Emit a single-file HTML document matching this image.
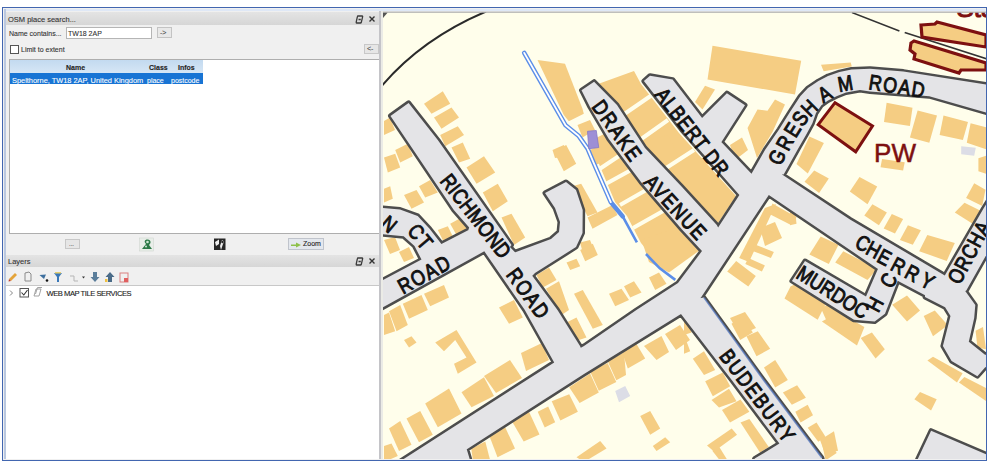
<!DOCTYPE html>
<html><head><meta charset="utf-8">
<style>
*{margin:0;padding:0;box-sizing:border-box}
html,body{width:991px;height:464px;overflow:hidden;background:#fff}
body{position:relative;font-family:"Liberation Sans",sans-serif;font-size:7px;color:#222}
.a{position:absolute}
#frame{left:2px;top:7px;width:985px;height:454px;border:1.6px solid #4266b0;background:#f0f0f0}
.tb{background:linear-gradient(#e4e4e4,#d6d6d6);height:13px}
.t{white-space:nowrap;-webkit-text-stroke:0.1px currentColor}
</style></head><body>
<div class="a" id="frame"></div>
<!-- light blue inner strip -->
<div class="a" style="left:4px;top:9px;width:981px;height:2px;background:#dfe8f6"></div>
<div class="a" style="left:3.5px;top:9px;width:2.3px;height:450px;background:#bac8e0"></div>

<!-- OSM title bar -->
<div class="a tb" style="left:6px;top:12px;width:375px;height:13px"></div>
<div class="a t" style="left:8px;top:15px;font-size:7.5px;color:#333">OSM place search...</div>
<svg class="a" style="left:354px;top:14px" width="24" height="10">
 <path d="M4 2 L8.2 2 Q8.8 2 8.6 2.8 L7.3 8.3 Q7.1 9 6.4 9 L2.6 9 Q2 9 2.2 8.2 L3.4 2.7 Q3.5 2 4 2 Z M4.5 5.5 L6.8 5.5" fill="none" stroke="#3a3a3a" stroke-width="1.3"/>
 <path d="M15.5 2.5l5 5M20.5 2.5l-5 5" stroke="#333" stroke-width="1.4"/>
</svg>
<div class="a t" style="left:9px;top:30px;font-size:7px;color:#333">Name contains...</div>
<div class="a" style="left:66px;top:27px;width:86px;height:12px;background:#fff;border:1px solid #b5b5b5"></div>
<div class="a t" style="left:68px;top:30px;font-size:7px;color:#333">TW18 2AP</div>
<div class="a" style="left:157px;top:27px;width:15px;height:11px;background:#e8e8e8;border:1px solid #c3c3c3"></div>
<div class="a t" style="left:160px;top:29px;font-size:7px;color:#444">-&gt;</div>
<div class="a" style="left:10px;top:45px;width:9px;height:9px;background:#fff;border:1px solid #555"></div>
<div class="a t" style="left:21px;top:46px;font-size:7px;color:#333">Limit to extent</div>
<div class="a" style="left:364px;top:44px;width:15px;height:10px;background:#e6e6e6;border:1px solid #c8c8c8"></div>
<div class="a t" style="left:367px;top:45px;font-size:7px;color:#444">&lt;-</div>

<!-- table -->
<div class="a" style="left:9px;top:59px;width:371px;height:175px;background:#fff;border:1px solid #aeaeae"></div>
<div class="a" style="left:10px;top:60px;width:193px;height:13px;background:linear-gradient(#c3daf0,#d6e6f5)"></div>
<div class="a t" style="left:66px;top:64px;font-size:7px;font-weight:bold;color:#222">Name</div>
<div class="a t" style="left:149px;top:64px;font-size:7px;font-weight:bold;color:#222">Class</div>
<div class="a t" style="left:178px;top:64px;font-size:7px;font-weight:bold;color:#222">Infos</div>
<div class="a" style="left:10px;top:73px;width:193px;height:11px;background:#1874d4"></div>
<div class="a t" style="left:12px;top:76px;font-size:7.4px;color:#fff">Spelthorne, TW18 2AP, United Kingdom</div>
<div class="a t" style="left:147px;top:76.5px;font-size:7px;color:#fff">place</div>
<div class="a t" style="left:171px;top:76.5px;font-size:7px;color:#fff">postcode</div>

<!-- button row -->
<div class="a" style="left:65px;top:239px;width:15px;height:10px;background:#e6e6e6;border:1px solid #c8c8c8"></div>
<div class="a t" style="left:69px;top:241px;font-size:6px;color:#555">...</div>
<div class="a" style="left:288px;top:238px;width:36px;height:12px;background:#e4e8ee;border:1px solid #c0c4cc"></div>
<div class="a t" style="left:303px;top:240px;font-size:7px;color:#222">Zoom</div>

<!-- Layers title -->
<div class="a tb" style="left:6px;top:255px;width:374px;height:12px"></div>
<div class="a t" style="left:8px;top:257px;font-size:7.5px;color:#333">Layers</div>
<svg class="a" style="left:354px;top:256px" width="24" height="10">
 <path d="M4 2 L8.2 2 Q8.8 2 8.6 2.8 L7.3 8.3 Q7.1 9 6.4 9 L2.6 9 Q2 9 2.2 8.2 L3.4 2.7 Q3.5 2 4 2 Z M4.5 5.5 L6.8 5.5" fill="none" stroke="#3a3a3a" stroke-width="1.3"/>
 <path d="M15.5 2.5l5 5M20.5 2.5l-5 5" stroke="#333" stroke-width="1.4"/>
</svg>
<div class="a" style="left:6px;top:285px;width:373px;height:174px;background:#fff;border-top:1px solid #c8c8c8"></div>
<svg class="a" style="left:0;top:230px" width="380" height="70">
 <!-- green icon button -->
 <rect x="139.5" y="238" width="14" height="13" fill="#e9eee9" stroke="#d0d6d0" stroke-width="0.6" transform="translate(0,-230)"/>
 <g transform="translate(0,-230)">
  <path d="M142 249 L146 244 Q143 241 146.5 239.5 Q151 239 150.5 243 L149 245 L152 249 Z" fill="#2d7a48"/>
  <circle cx="147.5" cy="242" r="1.3" fill="#cfe8d5"/>
  <circle cx="146" cy="246.5" r="1" fill="#cfe8d5"/>
  <rect x="214" y="238.5" width="11.5" height="11.5" fill="#262626"/>
  <path d="M215 242 L219 239.5 L219 244 L216 246 Z M222 240 Q225 241 223 244 L221 250 L220 246 Z" fill="#eee"/>
  <circle cx="222.5" cy="242" r="1.2" fill="#262626"/>
  <!-- zoom arrow -->
  <path d="M291 244.5 L296 244.5 L296 242.5 L301 245 L296 247.5 L296 246 L291 246 Z" fill="#8dc04a"/>
 </g>
 <!-- toolbar -->
 <g transform="translate(0,-230)">
  <path d="M9 279 L15 273 L17 275 L11 281 Z" fill="#e4a43a"/><path d="M9 279 L11 281 L8.5 281.5 Z" fill="#c0392b"/>
  <path d="M25 281 L25 273 L29 272 L31 274 L31 281 Z" fill="none" stroke="#8a8a8a" stroke-width="1"/>
  <path d="M39.5 275 L46 274.5 L44 279 Z" fill="#3d6f9e"/><circle cx="47" cy="280.5" r="1.3" fill="#111"/>
  <path d="M54 273 L62 273 L59 277 L59 282 L57 282 L57 277 Z" fill="#3a78b8"/><rect x="55" y="272" width="6" height="1.5" fill="#e8d070"/>
  <path d="M70 276 L74 276 L74 281 L78 281" fill="none" stroke="#b5b5b5" stroke-width="1"/>
  <path d="M82 276.5 L85 276.5 L83.5 278.5 Z" fill="#333"/>
  <path d="M93 272 L97 272 L97 277 L99.5 277 L95 282 L90.5 277 L93 277 Z" fill="#5a7d9a"/>
  <path d="M108 282 L112 282 L112 277 L114.5 277 L110 272 L105.5 277 L108 277 Z" fill="#4a6b88"/><rect x="105" y="279" width="2.5" height="3" fill="#f0c040"/>
  <rect x="120" y="273" width="8" height="9" fill="none" stroke="#d98080" stroke-width="1"/><rect x="124" y="278" width="4" height="4" fill="#e06060"/>
  <!-- tree row -->
  <path d="M10 290.5 L12.5 293 L10 295.5" fill="none" stroke="#777" stroke-width="0.9"/>
  <rect x="20" y="288.5" width="8.5" height="8.5" fill="#fff" stroke="#555" stroke-width="1"/>
  <path d="M21.5 292.5 L23.8 295 L27.5 290" fill="none" stroke="#333" stroke-width="1.1"/>
  <path d="M34 296 L36 289 L41 289 L39 296 Z M35.5 294 L37.5 287.5 L42 287.5" fill="none" stroke="#9a9a9a" stroke-width="0.9"/>
 </g>
</svg>
<div class="a t" style="left:46.5px;top:288.5px;font-size:7.6px;color:#222;letter-spacing:-0.45px;-webkit-text-stroke:0.12px #222">WEB MAP TILE SERVICES</div>

<!-- splitter -->
<div class="a" style="left:378.5px;top:11px;width:2.2px;height:448px;background:#c4c4c8"></div>
<div class="a" style="left:380.7px;top:11px;width:2.3px;height:448px;background:#ebebe6"></div>

<!-- MAP -->
<svg class="a" id="map" style="left:0;top:0" width="991" height="464" viewBox="0 0 991 464">
<defs><clipPath id="mc"><rect x="383" y="12" width="603" height="447"/></clipPath></defs>
<g clip-path="url(#mc)">
<rect x="383" y="12" width="603" height="447" fill="#fffeeb"/>
<!--MAPSTART-->
<g fill="#f5cd83"><path d="M424.0 103.8 L442.8 91.2 L450.2 103.8 L431.5 113.8Z"/><path d="M434.0 117.5 L451.5 107.5 L459.0 117.5 L441.5 128.8Z"/><path d="M440.2 135.0 L457.8 126.2 L464.0 135.0 L445.2 146.2Z"/><path d="M451.5 147.5 L462.8 142.5 L470.2 158.8 L459.0 162.5Z"/><path d="M466.5 167.5 L484.0 156.2 L495.2 172.5 L476.5 183.8Z"/><path d="M482.8 192.5 L497.8 183.8 L507.8 201.2 L492.8 211.2Z"/><path d="M501.5 217.5 L511.5 213.8 L525.2 237.5 L514.0 245.0Z"/><path d="M384.0 121.0 L390.0 117.5 L395.0 130.0 L384.0 135.0Z"/><path d="M384.0 157.5 L395.2 153.8 L400.2 167.5 L387.8 172.5Z"/><path d="M395.2 150.0 L407.8 143.8 L412.8 156.2 L400.2 162.5Z"/><path d="M384.0 188.8 L390.2 186.2 L392.8 198.8 L384.0 202.5Z"/><path d="M404.0 195.0 L416.5 190.0 L424.0 202.5 L411.5 208.8Z"/><path d="M419.0 186.2 L430.2 180.0 L437.8 192.5 L425.2 197.5Z"/><path d="M437.8 230.0 L447.8 226.2 L454.0 238.8 L444.0 242.5Z"/><path d="M450.2 223.8 L461.5 217.5 L469.0 228.8 L456.5 235.0Z"/><path d="M384.0 240.0 L395.0 237.0 L400.0 250.0 L390.0 254.0Z"/><path d="M399.0 252.0 L409.0 247.0 L414.0 258.0 L404.0 262.0Z"/><path d="M537.5 60.0 L565.0 63.8 L582.5 108.8 L583.8 113.8 L568.8 121.2 L563.8 115.0Z"/><path d="M577.5 125.0 L590.0 120.0 L595.0 130.0 L582.5 137.5Z"/><path d="M552.5 150.0 L563.8 145.0 L568.8 156.0 L555.0 158.0Z"/><path d="M553.8 151.2 L566.2 145.0 L576.2 163.8 L563.8 171.2Z"/><path d="M598.0 84.0 L641.0 140.0 L673.0 180.0 L716.0 226.0 L736.0 196.0 L679.0 133.0 L641.0 84.0 L634.0 71.0Z"/><path d="M695.0 102.0 L705.0 85.8 L715.0 89.5 L702.5 109.5Z"/><path d="M712.5 45.8 L801.2 60.8 L795.0 94.5 L707.5 79.5Z"/><path d="M747.5 128.0 L757.5 109.5 L767.5 110.8 L775.0 99.5 L785.0 104.5 L772.5 132.0 L757.0 158.0Z"/><path d="M730.0 145.0 L742.0 137.5 L748.0 150.0 L735.0 160.0Z"/><path d="M821.0 64.8 L850.7 62.6 L851.8 66.5 L823.7 71.3Z"/><path d="M886.6 102.7 L912.5 107.8 L909.9 125.9 L884.0 122.0Z"/><path d="M917.6 110.4 L937.0 115.6 L929.3 142.7 L909.9 137.6Z"/><path d="M943.5 115.6 L968.0 122.0 L962.9 140.1 L939.6 135.0Z"/><path d="M970.6 123.3 L986.0 127.2 L986.0 149.2 L966.8 142.7Z"/><path d="M882.1 159.1 L904.7 162.3 L903.1 170.4 L880.5 167.2Z"/><path d="M978.4 158.2 L986.0 155.7 L986.0 173.8 L978.4 171.2Z"/><path d="M796.5 163.9 L809.4 136.5 L823.9 142.9 L807.8 173.6Z"/><path d="M804.5 181.7 L814.2 170.4 L828.8 178.5 L819.1 193.0Z"/><path d="M849.8 191.4 L859.5 176.9 L877.2 186.5 L867.5 204.3Z"/><path d="M864.3 215.6 L872.4 204.3 L886.9 212.4 L878.9 225.3Z"/><path d="M883.7 228.5 L891.8 214.0 L903.1 218.9 L895.0 233.4Z"/><path d="M899.9 239.9 L907.9 225.3 L920.9 230.2 L912.8 244.7Z"/><path d="M919.2 251.2 L927.3 235.0 L954.8 243.1 L946.7 260.9Z"/><path d="M954.8 212.4 L964.5 202.7 L980.6 210.8 L972.6 223.7Z"/><path d="M966.1 197.9 L974.2 183.3 L985.5 189.8 L982.2 205.9Z"/><path d="M790.0 209.0 L794.8 207.5 L796.5 223.7 L790.0 225.3Z"/><path d="M809.4 254.4 L820.7 236.6 L838.5 244.7 L828.8 264.1Z"/><path d="M835.2 262.5 L843.3 251.2 L877.2 268.9 L867.5 280.0Z"/><path d="M764.9 208.1 L776.0 204.0 L749.0 262.0 L739.2 257.9Z"/><path d="M772.4 203.6 L796.6 217.2 L790.5 224.7 L769.4 214.1Z"/><path d="M760.0 228.0 L775.0 222.0 L782.0 238.0 L765.0 246.0Z"/><path d="M754.3 244.3 L773.9 251.9 L770.9 257.9 L751.3 250.4Z"/><path d="M748.3 257.9 L764.9 265.4 L761.9 271.5 L745.3 263.9Z"/><path d="M727.2 271.5 L736.2 260.9 L755.8 276.0 L748.3 286.6Z"/><path d="M790.5 286.6 L799.6 282.0 L826.7 301.7 L817.7 319.8 L784.5 298.6Z"/><path d="M820.7 307.7 L834.0 302.0 L842.0 318.0 L828.0 324.0Z"/><path d="M730.0 318.0 L745.0 312.0 L756.0 328.0 L740.0 335.0Z"/><path d="M384.0 315.0 L389.0 312.5 L395.2 331.2 L384.0 335.0Z"/><path d="M389.0 311.2 L400.2 305.0 L407.8 325.0 L396.5 331.2Z"/><path d="M402.8 303.8 L421.5 295.0 L427.8 310.0 L409.0 318.8Z"/><path d="M424.0 293.8 L444.0 285.0 L449.0 297.5 L430.2 306.2Z"/><path d="M404.0 340.0 L411.5 336.2 L416.5 342.5 L409.0 347.5Z"/><path d="M435.2 342.5 L456.5 330.0 L476.5 362.5 L457.8 373.8 L454.0 363.8 L466.5 357.5 L455.2 340.0 L444.0 351.2Z"/><path d="M499.0 307.5 L514.0 300.0 L522.8 317.5 L509.0 323.8Z"/><path d="M384.0 446.0 L391.5 443.5 L397.8 456.0 L384.0 462.0Z"/><path d="M389.0 428.5 L400.2 421.0 L411.5 444.8 L399.0 451.0Z"/><path d="M406.5 418.5 L420.2 411.0 L432.8 434.8 L419.0 442.2Z"/><path d="M425.2 403.5 L449.0 388.5 L461.5 413.5 L437.8 427.2Z"/><path d="M461.5 392.2 L484.0 377.2 L494.0 396.0 L471.5 407.2Z"/><path d="M484.0 376.0 L510.0 360.0 L522.0 378.0 L496.0 393.0Z"/><path d="M521.0 353.0 L542.0 343.0 L549.0 360.0 L526.0 371.0Z"/><path d="M471.3 448.5 L485.3 441.5 L490.6 462.0 L473.1 462.0Z"/><path d="M488.8 434.5 L504.5 425.8 L515.0 448.5 L497.5 457.2Z"/><path d="M511.5 420.5 L529.0 411.8 L539.5 434.5 L523.7 441.5Z"/><path d="M537.7 411.8 L548.2 406.5 L555.2 422.3 L544.7 427.5Z"/><path d="M551.7 401.3 L569.2 394.3 L577.9 411.8 L560.4 420.5Z"/><path d="M569.2 387.3 L590.1 373.4 L598.8 392.6 L579.6 403.1Z"/><path d="M590.1 371.6 L607.6 362.9 L616.3 382.1 L598.8 390.8Z"/><path d="M607.6 361.1 L624.0 352.4 L626.0 375.1 L616.3 380.3Z"/><path d="M622.0 352.0 L636.5 344.0 L645.2 358.5 L627.8 368.5Z"/><path d="M644.0 346.0 L661.5 336.0 L669.0 352.0 L656.5 360.0Z"/><path d="M665.0 334.0 L680.0 325.0 L690.0 340.0 L676.0 350.0Z"/><path d="M640.2 416.0 L650.2 411.0 L660.2 428.5 L650.2 434.8Z"/><path d="M652.8 446.0 L665.2 437.2 L670.2 442.2 L656.5 451.0Z"/><path d="M576.5 457.2 L600.2 441.0 L606.5 448.5 L584.0 462.0Z"/><path d="M536.5 275.0 L549.0 267.5 L556.5 280.0 L542.8 287.5Z"/><path d="M546.0 288.8 L559.0 281.2 L569.0 310.0 L561.5 315.0Z"/><path d="M566.5 322.5 L576.5 317.5 L586.5 337.5 L575.2 341.2Z"/><path d="M574.0 293.8 L582.8 290.0 L602.8 325.0 L592.8 328.8Z"/><path d="M566.5 262.5 L576.5 258.8 L580.2 266.2 L570.2 270.0Z"/><path d="M580.2 250.0 L592.8 243.8 L597.8 255.0 L585.2 261.2Z"/><path d="M609.0 293.8 L621.5 288.8 L629.0 300.0 L615.2 306.2Z"/><path d="M624.0 286.2 L634.0 281.2 L641.5 292.5 L630.2 297.5Z"/><path d="M649.0 277.5 L659.0 272.5 L666.5 283.8 L655.2 290.0Z"/><path d="M572.5 186.2 L581.2 183.8 L597.5 212.5 L587.5 216.2Z"/><path d="M592.0 140.0 L599.0 164.0 L615.0 202.0 L627.0 216.0 L641.0 243.0 L652.0 256.0 L700.0 250.0 L650.0 180.0 L612.0 130.0Z"/><path d="M580.0 242.5 L590.0 240.0 L595.0 252.5 L583.8 256.0Z"/><path d="M641.5 240.0 L684.0 225.0 L700.0 250.0 L669.0 272.5 L649.0 262.0Z"/><path d="M650.0 140.0 L668.0 135.0 L680.0 160.0 L660.0 165.0Z"/><path d="M590.0 150.0 L600.0 145.0 L606.0 160.0 L596.0 165.0Z"/><path d="M587.5 217.5 L612.5 205.0 L617.5 215.0 L592.5 228.8Z"/><path d="M731.5 323.8 L742.8 316.2 L752.8 332.5 L740.2 340.0Z"/><path d="M746.5 336.2 L757.8 331.2 L770.2 348.8 L756.5 356.2Z"/><path d="M764.0 367.5 L775.2 360.0 L787.8 380.0 L775.2 387.5Z"/><path d="M782.9 392.4 L797.1 385.3 L805.9 397.7 L791.8 404.7Z"/><path d="M795.3 411.8 L807.7 404.7 L813.0 415.3 L800.6 422.4Z"/><path d="M807.7 427.7 L816.5 422.4 L825.3 436.5 L818.3 441.8Z"/><path d="M820.0 440.0 L834.0 431.2 L838.0 450.7 L825.3 454.2Z"/><path d="M684.0 320.0 L687.8 317.5 L691.5 332.5 L684.0 335.0Z"/><path d="M684.0 342.5 L686.5 341.2 L690.2 351.2 L684.0 353.8Z"/><path d="M692.8 358.8 L704.0 351.2 L715.2 370.0 L704.0 375.0Z"/><path d="M705.2 381.2 L722.8 372.5 L730.2 386.2 L712.8 396.2Z"/><path d="M711.5 400.0 L729.0 388.8 L736.5 401.2 L719.0 407.5Z"/><path d="M722.0 410.0 L740.5 399.4 L749.4 411.8 L730.0 422.4Z"/><path d="M707.0 445.4 L731.7 428.6 L737.0 434.8 L714.0 451.6Z"/><path d="M712.3 450.7 L719.3 447.1 L728.2 461.3 L721.1 462.0Z"/><path d="M740.5 422.4 L749.4 418.9 L768.8 447.1 L760.0 452.4Z"/><path d="M821.9 321.5 L838.5 312.2 L864.4 327.0 L857.0 345.6Z"/><path d="M860.7 338.1 L871.9 332.6 L884.8 349.3 L875.6 358.5Z"/><path d="M892.2 304.8 L907.0 295.6 L920.0 310.4 L907.0 321.5Z"/><path d="M923.7 315.9 L934.8 310.4 L947.8 325.2 L933.0 336.3Z"/><path d="M927.4 360.4 L933.0 356.7 L962.6 373.3 L957.0 382.6Z"/><path d="M958.9 382.6 L964.4 377.0 L986.0 388.1 L986.0 401.1Z"/><path d="M914.4 399.3 L920.0 391.9 L936.7 399.3 L931.1 410.4Z"/><path d="M975.6 330.7 L983.0 327.0 L986.0 349.3 L977.4 347.4Z"/><path d="M820.0 434.4 L827.4 438.1 L836.7 453.0 L825.6 460.4Z"/></g>
<path d="M961.2 146.2 L975.8 147.8 L974.2 155.8 L961.2 154.2Z M615.2 391.0 L625.2 386.0 L630.2 396.0 L619.0 402.2Z" fill="#dcdde6"/>
<path d="M598.0 170.0 L628.0 150.0 M602.0 186.0 L642.0 164.0 M620.0 205.0 L655.0 185.0 M633.0 228.0 L672.0 206.0 M620.0 117.0 L652.0 95.0 M637.0 142.0 L668.0 120.0 M663.0 170.0 L694.0 150.0" fill="none" stroke="#fffeeb" stroke-width="4"/>
<path d="M380 88 Q 420.5 39.25 486 11.5" fill="none" stroke="#2a2a2a" stroke-width="2"/>
<path d="M852 12.6 L899.4 31.1 M904.7 32.6 L990 60" fill="none" stroke="#333" stroke-width="1.6"/>
<path d="M921 25 L935 24 L937 22 L986 35 L986 47 L922 37 Z M911 43 L914 41 L986 63 L986 70 L961 70 L959 73 L914 59 L915 54 L910 50 Z" fill="#f5cd83" stroke="#7d1010" stroke-width="3.2" stroke-linejoin="miter"/>
<path d="M818.2 124.6 L835 102.7 L872.5 126 L855.7 151.8 Z" fill="#f5cd83" stroke="#7d1010" stroke-width="3"/>
<path d="M524.2 52.9 L565.6 125.3 L578.5 135.7 L587.6 148.6 L594.2 164.2 L610.8 202.1 L622.7 216.4" fill="none" stroke="#5b8ee8" stroke-width="4.6" stroke-linejoin="round" stroke-linecap="round"/>
<path d="M524.2 52.9 L565.6 125.3 L578.5 135.7 L587.6 148.6 L594.2 164.2 L610.8 202.1" fill="none" stroke="#fff" stroke-width="1.8" stroke-linejoin="round" stroke-linecap="round"/>
<path d="M622.7 216.4 L636.9 242.4 M646 254 L659.8 268.3 L675.3 279.9" fill="none" stroke="#5b8ee8" stroke-width="2.6"/>
<path d="M587.5 131.25 L596.25 130.5 L598.75 147.5 L588.75 148.75 Z" fill="#9d8fd6" stroke="#8478c4" stroke-width="0.8"/>
<path d="M390.5 115.9 L408.6 102.9 L437.8 140.0 L511.5 245.0 L500.0 260.0 L470.5 229.0 L453.8 210.0Z M470.0 225.0 L498.0 235.0 L515.5 252.7 L531.7 275.0 L557.5 310.0 L580.0 346.0 L585.0 358.0 L554.2 362.4 L524.8 310.0 L484.3 251.3 L465.0 240.0Z M370.0 207.0 L400.0 209.5 L417.7 215.9 L429.6 228.8 L441.4 243.9 L450.0 250.0 L425.0 268.0 L421.5 259.6 L414.5 246.0 L403.7 236.3 L370.0 233.0Z M370.0 287.0 L421.5 259.6 L441.4 243.9 L470.5 229.0 L480.0 232.0 L490.0 248.0 L484.3 251.3 L370.0 314.5Z M505.0 258.0 L514.0 252.7 L551.0 239.0 L559.0 232.0 L560.0 222.0 L555.0 208.0 L545.0 193.0 L566.0 182.0 L576.0 190.0 L582.7 210.0 L582.5 233.0 L576.0 247.0 L535.0 273.0 L524.0 284.0Z M385.0 471.0 L554.2 362.4 L584.0 346.0 L636.4 310.0 L678.0 283.0 L702.0 251.0 L716.8 229.6 L739.4 194.9 L751.5 173.8 L765.0 150.0 L779.2 129.3 L790.0 112.0 L800.3 96.2 L808.0 88.0 L818.4 81.1 L828.0 76.0 L839.5 72.1 L851.5 69.5 L870.0 68.8 L903.4 71.6 L995.0 86.0 L995.0 115.0 L929.3 96.2 L870.0 91.5 L860.0 90.1 L846.0 92.5 L836.5 96.2 L828.0 100.5 L821.4 105.2 L816.0 113.0 L812.4 123.3 L806.0 135.0 L798.8 147.4 L783.7 174.6 L781.7 174.3 L768.8 195.0 L701.0 297.6 L682.2 313.3 L584.0 374.0 L466.5 449.5 L445.0 470.0Z M581.5 90.2 L594.1 81.7 L617.0 105.0 L645.0 148.0 L682.0 187.0 L716.8 225.0 L730.0 250.0 L702.0 251.0 L682.0 229.6 L641.0 182.0 L608.8 139.0 L590.0 107.0Z M643.9 81.1 L650.0 75.7 L672.6 79.6 L702.7 118.8 L721.3 142.0 L751.5 173.8 L760.0 190.0 L739.4 194.9 L682.0 130.0Z M695.0 125.0 L726.9 93.2 L745.0 105.2 L720.8 143.0 L710.0 140.0Z M775.0 165.0 L781.7 174.3 L850.0 219.4 L944.8 275.4 L960.0 290.0 L935.5 300.8 L899.5 281.8 L878.0 268.9 L768.8 195.0 L760.0 185.0Z M944.8 275.4 L983.5 208.6 L995.0 190.0 L995.0 262.0 L985.7 256.0 L966.3 290.5 L950.0 300.0Z M925.0 290.0 L964.5 290.0 L975.3 305.1 L974.2 318.0 L968.8 341.7 L985.0 354.7 L995.0 354.0 L995.0 362.0 L985.0 367.6 L977.4 376.2 L951.6 361.1 L942.9 346.0 L946.2 333.1 L950.5 315.9 L945.1 307.2 L925.0 297.0Z M805.0 261.0 L866.0 296.6 L879.0 266.4 L881.0 260.0 L902.0 268.0 L897.0 282.8 L885.0 313.8 L874.7 321.6 L854.0 319.8 L791.9 281.0Z M680.4 313.3 L690.0 300.0 L703.9 297.6 L763.5 380.0 L821.8 457.7 L825.0 470.0 L750.0 470.0 L754.7 458.6 L779.4 443.6 L731.7 380.0Z M440.0 460.0 L466.5 448.5 L473.0 470.0 L400.0 470.0Z M912.6 470.0 L931.1 430.7 L995.0 458.0 L995.0 470.0Z" fill="#4d4d4d" stroke="#4d4d4d" stroke-width="5" stroke-linejoin="round"/>
<path d="M390.5 115.9 L408.6 102.9 L437.8 140.0 L511.5 245.0 L500.0 260.0 L470.5 229.0 L453.8 210.0Z M470.0 225.0 L498.0 235.0 L515.5 252.7 L531.7 275.0 L557.5 310.0 L580.0 346.0 L585.0 358.0 L554.2 362.4 L524.8 310.0 L484.3 251.3 L465.0 240.0Z M370.0 207.0 L400.0 209.5 L417.7 215.9 L429.6 228.8 L441.4 243.9 L450.0 250.0 L425.0 268.0 L421.5 259.6 L414.5 246.0 L403.7 236.3 L370.0 233.0Z M370.0 287.0 L421.5 259.6 L441.4 243.9 L470.5 229.0 L480.0 232.0 L490.0 248.0 L484.3 251.3 L370.0 314.5Z M505.0 258.0 L514.0 252.7 L551.0 239.0 L559.0 232.0 L560.0 222.0 L555.0 208.0 L545.0 193.0 L566.0 182.0 L576.0 190.0 L582.7 210.0 L582.5 233.0 L576.0 247.0 L535.0 273.0 L524.0 284.0Z M385.0 471.0 L554.2 362.4 L584.0 346.0 L636.4 310.0 L678.0 283.0 L702.0 251.0 L716.8 229.6 L739.4 194.9 L751.5 173.8 L765.0 150.0 L779.2 129.3 L790.0 112.0 L800.3 96.2 L808.0 88.0 L818.4 81.1 L828.0 76.0 L839.5 72.1 L851.5 69.5 L870.0 68.8 L903.4 71.6 L995.0 86.0 L995.0 115.0 L929.3 96.2 L870.0 91.5 L860.0 90.1 L846.0 92.5 L836.5 96.2 L828.0 100.5 L821.4 105.2 L816.0 113.0 L812.4 123.3 L806.0 135.0 L798.8 147.4 L783.7 174.6 L781.7 174.3 L768.8 195.0 L701.0 297.6 L682.2 313.3 L584.0 374.0 L466.5 449.5 L445.0 470.0Z M581.5 90.2 L594.1 81.7 L617.0 105.0 L645.0 148.0 L682.0 187.0 L716.8 225.0 L730.0 250.0 L702.0 251.0 L682.0 229.6 L641.0 182.0 L608.8 139.0 L590.0 107.0Z M643.9 81.1 L650.0 75.7 L672.6 79.6 L702.7 118.8 L721.3 142.0 L751.5 173.8 L760.0 190.0 L739.4 194.9 L682.0 130.0Z M695.0 125.0 L726.9 93.2 L745.0 105.2 L720.8 143.0 L710.0 140.0Z M775.0 165.0 L781.7 174.3 L850.0 219.4 L944.8 275.4 L960.0 290.0 L935.5 300.8 L899.5 281.8 L878.0 268.9 L768.8 195.0 L760.0 185.0Z M944.8 275.4 L983.5 208.6 L995.0 190.0 L995.0 262.0 L985.7 256.0 L966.3 290.5 L950.0 300.0Z M925.0 290.0 L964.5 290.0 L975.3 305.1 L974.2 318.0 L968.8 341.7 L985.0 354.7 L995.0 354.0 L995.0 362.0 L985.0 367.6 L977.4 376.2 L951.6 361.1 L942.9 346.0 L946.2 333.1 L950.5 315.9 L945.1 307.2 L925.0 297.0Z M805.0 261.0 L866.0 296.6 L879.0 266.4 L881.0 260.0 L902.0 268.0 L897.0 282.8 L885.0 313.8 L874.7 321.6 L854.0 319.8 L791.9 281.0Z M680.4 313.3 L690.0 300.0 L703.9 297.6 L763.5 380.0 L821.8 457.7 L825.0 470.0 L750.0 470.0 L754.7 458.6 L779.4 443.6 L731.7 380.0Z M440.0 460.0 L466.5 448.5 L473.0 470.0 L400.0 470.0Z M912.6 470.0 L931.1 430.7 L995.0 458.0 L995.0 470.0Z" fill="#e4e4e7"/>
<path d="M703.9 297.6 L763.5 380 L821.8 457.7" stroke="#5a7cc0" stroke-width="1.6" fill="none" opacity="0.8"/>
<g font-family="Liberation Sans, sans-serif">
<text transform="translate(476,216) rotate(52) scale(0.84,1)" font-size="21.25" letter-spacing="0.30" text-anchor="middle" dominant-baseline="central" fill="#111" stroke="#111" stroke-width="1.0">RICHMOND</text>
<text transform="translate(528.6,293.6) rotate(54) scale(0.84,1)" font-size="21.25" letter-spacing="1.80" text-anchor="middle" dominant-baseline="central" fill="#111" stroke="#111" stroke-width="1.0">ROAD</text>
<text transform="translate(424.5,274) rotate(-29) scale(0.84,1)" font-size="21.25" letter-spacing="1.80" text-anchor="middle" dominant-baseline="central" fill="#111" stroke="#111" stroke-width="1.0">ROAD</text>
<text transform="translate(389,224) rotate(40) scale(0.84,1)" font-size="21.25" letter-spacing="0.00" text-anchor="middle" dominant-baseline="central" fill="#111" stroke="#111" stroke-width="1.0">N</text>
<text transform="translate(421,237) rotate(50) scale(0.84,1)" font-size="21.25" letter-spacing="1.80" text-anchor="middle" dominant-baseline="central" fill="#111" stroke="#111" stroke-width="1.0">CT</text>
<text transform="translate(617.5,131) rotate(54.5) scale(0.84,1)" font-size="21.25" letter-spacing="2.10" text-anchor="middle" dominant-baseline="central" fill="#111" stroke="#111" stroke-width="1.0">DRAKE</text>
<text transform="translate(676,207.5) rotate(47) scale(0.84,1)" font-size="21.25" letter-spacing="1.80" text-anchor="middle" dominant-baseline="central" fill="#111" stroke="#111" stroke-width="1.0">AVENUE</text>
<text transform="translate(692.5,132) rotate(52) scale(0.84,1)" font-size="21.25" letter-spacing="0.80" text-anchor="middle" dominant-baseline="central" fill="#111" stroke="#111" stroke-width="1.0">ALBERT DR</text>
<text transform="translate(776.8,157) rotate(-65) scale(0.84,1)" font-size="21.25" letter-spacing="0.00" text-anchor="middle" dominant-baseline="central" fill="#111" stroke="#111" stroke-width="1.0">G</text>
<text transform="translate(784.6,142.8) rotate(-62) scale(0.84,1)" font-size="21.25" letter-spacing="0.00" text-anchor="middle" dominant-baseline="central" fill="#111" stroke="#111" stroke-width="1.0">R</text>
<text transform="translate(792.3,129.8) rotate(-58) scale(0.84,1)" font-size="21.25" letter-spacing="0.00" text-anchor="middle" dominant-baseline="central" fill="#111" stroke="#111" stroke-width="1.0">E</text>
<text transform="translate(800,118.2) rotate(-55) scale(0.84,1)" font-size="21.25" letter-spacing="0.00" text-anchor="middle" dominant-baseline="central" fill="#111" stroke="#111" stroke-width="1.0">S</text>
<text transform="translate(809.1,107.8) rotate(-45) scale(0.84,1)" font-size="21.25" letter-spacing="0.00" text-anchor="middle" dominant-baseline="central" fill="#111" stroke="#111" stroke-width="1.0">H</text>
<text transform="translate(824.6,93.6) rotate(-30) scale(0.84,1)" font-size="21.25" letter-spacing="0.00" text-anchor="middle" dominant-baseline="central" fill="#111" stroke="#111" stroke-width="1.0">A</text>
<text transform="translate(845.3,83.3) rotate(-10) scale(0.84,1)" font-size="21.25" letter-spacing="0.00" text-anchor="middle" dominant-baseline="central" fill="#111" stroke="#111" stroke-width="1.0">M</text>
<text transform="translate(897.6,85.9) rotate(9) scale(0.84,1)" font-size="21.25" letter-spacing="1.80" text-anchor="middle" dominant-baseline="central" fill="#111" stroke="#111" stroke-width="1.0">ROAD</text>
<text transform="translate(862.9,243) rotate(28) scale(0.84,1)" font-size="21.25" letter-spacing="0.00" text-anchor="middle" dominant-baseline="central" fill="#111" stroke="#111" stroke-width="1.0">C</text>
<text transform="translate(873.7,249.5) rotate(28) scale(0.84,1)" font-size="21.25" letter-spacing="0.00" text-anchor="middle" dominant-baseline="central" fill="#111" stroke="#111" stroke-width="1.0">H</text>
<text transform="translate(884.5,257) rotate(28) scale(0.84,1)" font-size="21.25" letter-spacing="0.00" text-anchor="middle" dominant-baseline="central" fill="#111" stroke="#111" stroke-width="1.0">E</text>
<text transform="translate(898.5,265.7) rotate(28) scale(0.84,1)" font-size="21.25" letter-spacing="0.00" text-anchor="middle" dominant-baseline="central" fill="#111" stroke="#111" stroke-width="1.0">R</text>
<text transform="translate(912.5,273.2) rotate(28) scale(0.84,1)" font-size="21.25" letter-spacing="0.00" text-anchor="middle" dominant-baseline="central" fill="#111" stroke="#111" stroke-width="1.0">R</text>
<text transform="translate(927.5,280.8) rotate(28) scale(0.84,1)" font-size="21.25" letter-spacing="0.00" text-anchor="middle" dominant-baseline="central" fill="#111" stroke="#111" stroke-width="1.0">Y</text>
<text transform="translate(969,252) rotate(-62) scale(0.84,1)" font-size="21.25" letter-spacing="0.80" text-anchor="middle" dominant-baseline="central" fill="#111" stroke="#111" stroke-width="1.0">ORCHA</text>
<text transform="translate(833,292) rotate(32) scale(0.84,1)" font-size="21.25" letter-spacing="0.00" text-anchor="middle" dominant-baseline="central" fill="#111" stroke="#111" stroke-width="1.0">MURDOC</text>
<text transform="translate(874.7,304.3) rotate(-62) scale(0.84,1)" font-size="21.25" letter-spacing="0.00" text-anchor="middle" dominant-baseline="central" fill="#111" stroke="#111" stroke-width="1.0">H</text>
<text transform="translate(888.4,280.2) rotate(-62) scale(0.84,1)" font-size="21.25" letter-spacing="0.00" text-anchor="middle" dominant-baseline="central" fill="#111" stroke="#111" stroke-width="1.0">C</text>
<text transform="translate(758,396) rotate(53) scale(0.84,1)" font-size="21.25" letter-spacing="1.80" text-anchor="middle" dominant-baseline="central" fill="#111" stroke="#111" stroke-width="1.0">BUDEBURY</text>
<text transform="translate(895,153) rotate(0) scale(1,1)" font-size="26.00" letter-spacing="0.00" text-anchor="middle" dominant-baseline="central" fill="#7d1010" stroke="#7d1010" stroke-width="0.5">PW</text>
<text transform="translate(976,8) rotate(0) scale(1,1)" font-size="26.00" letter-spacing="0.00" text-anchor="middle" dominant-baseline="central" fill="#7d1010" stroke="#7d1010" stroke-width="1.0">Sta</text>
</g>
<!--MAPEND-->
</g>
<rect x="383" y="11.6" width="603" height="1.2" fill="#b0b0b0"/><path d="M383 12.8 L387.5 12.8 L383 18 Z" fill="#555"/>
</svg>
</body></html>
